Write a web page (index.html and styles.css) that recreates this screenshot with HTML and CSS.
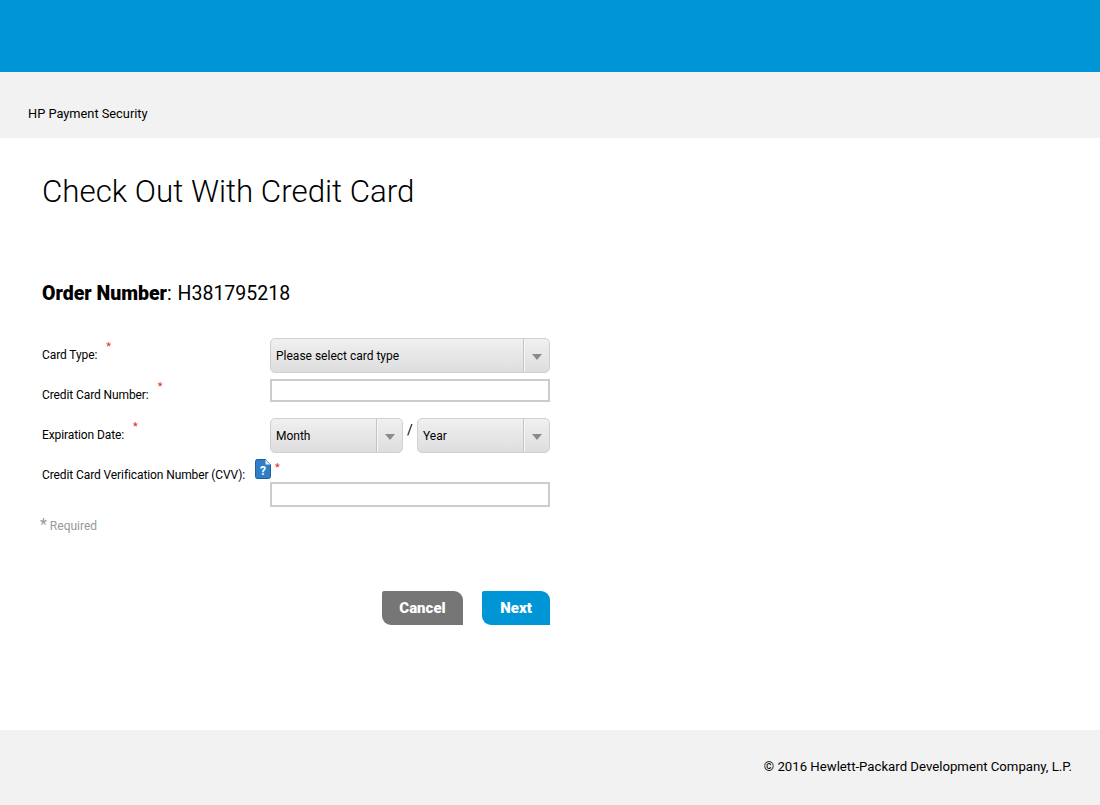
FILE: index.html
```html
<!DOCTYPE html>
<html>
  <head>
    <title>HP Payment Security</title>
    <link rel="stylesheet" href="styles.css">
  </head>
  <body>
    <header class="top-bar"></header>
    <div class="sub-bar">HP Payment Security</div>
    <main class="content">
      <h1>Check Out With Credit Card</h1>
      <p class="order"><strong>Order Number</strong>: <span class="order-id">H381795218</span></p>
      <form class="card-form">
        <div class="row">
          <div class="label">Card Type:<span class="star star-far">*</span></div>
          <div class="control">
            <div class="select">
              <span class="select-text">Please select card type</span>
              <span class="select-arrow"><i></i></span>
            </div>
          </div>
        </div>
        <div class="row">
          <div class="label">Credit Card Number:<span class="star star-far">*</span></div>
          <div class="control">
            <input class="text-input" type="text" />
          </div>
        </div>
        <div class="row">
          <div class="label">Expiration Date:<span class="star star-far">*</span></div>
          <div class="control date">
            <div class="select">
              <span class="select-text">Month</span>
              <span class="select-arrow"><i></i></span>
            </div>
            <span class="slash">/</span>
            <div class="select">
              <span class="select-text">Year</span>
              <span class="select-arrow"><i></i></span>
            </div>
          </div>
        </div>
        <div class="row row-cvv">
          <div class="label label-cvv">
            <span>Credit Card Verification Number (CVV):</span>
            <svg class="help" viewBox="0 0 16 20" width="16" height="20">
              <path d="M2 .5h8.500l5 5V17.500a2 2 0 0 1-2 2H2a2 2 0 0 1-1.500-2V2.500a2 2 0 0 1 1.500-2Z" fill="#2f7fc8" stroke="#1f5f9c" stroke-width="1" />
              <path d="M10.500 .5v5h5Z" fill="#e4eef8" />
              <text x="8" y="15.500" text-anchor="middle" class="help-mark">?</text>
            </svg>
          </div>
          <div class="control cvv">
            <span class="star star-cvv">*</span>
            <input class="text-input" type="text" />
          </div>
        </div>
        <p class="required"><span>*</span> Required</p>
        <div class="actions">
          <button type="button" class="btn btn-cancel">Cancel</button>
          <button type="button" class="btn btn-next">Next</button>
        </div>
      </form>
    </main>
    <footer>© 2016 Hewlett-Packard Development Company, L.P.</footer>
  </body>
</html>
```

FILE: styles.css
```css
* {
  box-sizing: border-box;
}

body {
  margin: 0;
  height: 805px;
  display: flex;
  flex-direction: column;
  background-color: white;
  color: #000;
  font-family: Roboto, "Noto Sans", sans-serif;
  font-size: 12px;
}

.top-bar {
  height: 72px;
  background-color: #0096d6;
}

.sub-bar {
  height: 66px;
  padding: 33px 0 0 28px;
  background-color: #f2f2f2;
  font-size: 12.800px;
  line-height: 17px;
}

.content {
  flex: 1;
  padding: 0 0 0 42px;
}

h1 {
  margin: 33px 0 0;
  font-size: 31.300px;
  font-weight: 300;
  line-height: 41px;
}

.order {
  margin: 70px 0 0;
  font-size: 19.500px;
  line-height: 24px;
}

.order strong {
  font-weight: 900;
}

.order-id {
  margin-left: 1px;
}

.card-form {
  width: 508px;
  margin-top: 32px;
}

.row {
  display: flex;
  height: 40px;
}

.row-cvv {
  height: 49px;
}

.label {
  flex-shrink: 0;
  width: 228px;
  padding-top: 9px;
  letter-spacing: -0.100px;
  line-height: 16px;
  white-space: nowrap;
}

.label-cvv {
  display: flex;
  align-items: flex-start;
}

.control {
  width: 280px;
}

.date {
  display: flex;
}

.date .select {
  width: 133px;
}

.slash {
  width: 14px;
  padding-top: 3px;
  text-align: center;
  font-size: 14px;
  line-height: 18px;
}

.select {
  display: flex;
  height: 35px;
  border: 1px solid #d0d0d0;
  border-radius: 5px;
  background: linear-gradient(#f0f0f0, #dedede);
  line-height: 35px;
}

.select-text {
  flex: 1;
  padding-left: 5px;
}

.select-arrow {
  display: flex;
  align-items: center;
  justify-content: center;
  width: 25px;
  border-left: 1px solid #f7f7f7;
  box-shadow: -1px 0 0 #c4c4c4;
}

.select-arrow i {
  width: 0;
  height: 0;
  margin-top: 2px;
  border-top: 6px solid #8a8a8a;
  border-left: 5.500px solid transparent;
  border-right: 5.500px solid transparent;
}

.text-input {
  display: block;
  width: 280px;
  height: 23px;
  margin-top: 1px;
  border: 2px solid #cccccc;
  background-color: white;
}

.cvv .text-input {
  height: 25px;
  margin-top: 0;
}

.star {
  color: #f01c24;
  font-size: 11px;
}

.star-far {
  position: relative;
  top: -9px;
  margin-left: 9px;
}

.star-cvv {
  display: block;
  height: 24px;
  margin-left: 5px;
  line-height: 19px;
}

.help {
  flex-shrink: 0;
  margin: -8px 0 0 10px;
}

.help-mark {
  fill: white;
  font-family: Roboto, sans-serif;
  font-size: 12px;
  font-weight: 700;
}

.required {
  margin: 0 0 0 -2px;
  padding-top: 10px;
  color: #999999;
  line-height: 16px;
}

.required span {
  font-size: 16px;
}

.actions {
  display: flex;
  justify-content: flex-end;
  gap: 19px;
  margin-top: 57px;
}

.btn {
  height: 34px;
  border: none;
  border-radius: 2px 9px 0 9px;
  color: white;
  font-family: Roboto, sans-serif;
  font-size: 15px;
  font-weight: 900;
}

.btn-cancel {
  width: 81px;
  background-color: #767676;
}

.btn-next {
  width: 68px;
  background-color: #0096d6;
}

footer {
  height: 75px;
  padding: 28px 28px 0 0;
  background-color: #f2f2f2;
  text-align: right;
  font-size: 13.200px;
  line-height: 17px;
}
```
